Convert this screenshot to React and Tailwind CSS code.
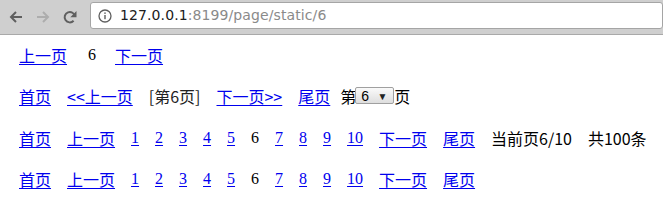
import React from "react";

const cjk = "font-['Noto_Sans_CJK_SC',sans-serif]";
const serif = "font-['Liberation_Serif','Noto_Sans_CJK_SC',serif]";
const link = "text-[#0000ee] underline underline-offset-2";

const BrowserBar = () => (
  <div className="h-[35px] bg-[#cfcfcf] border-b border-[#a9a9a9] flex items-center">
    {/* nav buttons */}
    <div className="flex items-center w-[90px] h-full">
      <svg width="16" height="16" viewBox="0 0 16 16" className="ml-[8px]">
        <path d="M14 8H3M8 3L3 8l5 5" fill="none" stroke="#5f5f5f" strokeWidth="2" />
      </svg>
      <svg width="16" height="16" viewBox="0 0 16 16" className="ml-[11px]">
        <path d="M2 8h11M8 3l5 5-5 5" fill="none" stroke="#adadad" strokeWidth="2" />
      </svg>
      <svg width="16" height="16" viewBox="0 0 16 16" className="ml-[11px]">
        <path d="M13 7.5A5.2 5.2 0 1 0 11.6 11.8" fill="none" stroke="#5f5f5f" strokeWidth="2" />
        <path d="M14.5 2v6.2H8.3z" fill="#5f5f5f" />
      </svg>
    </div>
    <div className="flex-1 h-[27px] mt-[-3px] bg-white border border-[#a5a5a5] rounded-[3px] flex items-center">
      <svg width="14" height="14" viewBox="0 0 14 14" className="ml-[7px]">
        <circle cx="7" cy="7" r="6" fill="none" stroke="#5f5f5f" strokeWidth="1.3" />
        <rect x="6.3" y="6" width="1.4" height="4.2" fill="#5f5f5f" />
        <rect x="6.3" y="3.4" width="1.4" height="1.5" fill="#5f5f5f" />
      </svg>
      <span className="ml-[8px] text-[14px] font-['DejaVu_Sans',sans-serif] tracking-[0.1px]">
        <span className="text-[#202020]">127.0.0.1</span>
        <span className="text-[#8a8a8a]">:8199/page/static/6</span>
      </span>
    </div>
  </div>
);

const nums = [1, 2, 3, 4, 5, 6, 7, 8, 9, 10];

const NumRow = ({ extra }) => (
  <div className="flex items-center gap-4 text-[16px]">
    <a className={`${cjk} ${link}`}>首页</a>
    <a className={`${cjk} ${link}`}>上一页</a>
    {nums.map((n) =>
      n === 6 ? (
        <span key={n} className={`${serif} text-black`}>{n}</span>
      ) : (
        <a key={n} className={`${serif} ${link}`}>{n}</a>
      )
    )}
    <a className={`${cjk} ${link}`}>下一页</a>
    <a className={`${cjk} ${link}`}>尾页</a>
    {extra}
  </div>
);

export default function App() {
  return (
    <div className="w-[663px] h-[219px] bg-white overflow-hidden">
      <BrowserBar />
      <div className="pl-[19px] text-[16px] leading-[20px]">
        <div className="h-[40px] flex items-center">
          <a className={`${cjk} ${link}`}>上一页</a>
          <span className={`${serif} ml-[21px] text-black`}>6</span>
          <a className={`${cjk} ${link} ml-[19px]`}>下一页</a>
        </div>
        <div className="h-[41px] flex items-center">
          <a className={`${cjk} ${link}`}>首页</a>
          <a className={`${cjk} ${link} ml-4`}>&lt;&lt;上一页</a>
          <span className={`${cjk} ml-4 text-[#222]`}>[第6页]</span>
          <a className={`${cjk} ${link} ml-4`}>下一页&gt;&gt;</a>
          <a className={`${cjk} ${link} ml-4`}>尾页</a>
          <span className={`${cjk} ml-[10px] text-black`}>第</span>
          <div className="ml-[-1px] w-[39px] h-[17px] border border-[#a0a0a0] rounded-[2px] bg-gradient-to-b from-[#fafafa] to-[#dedede] flex items-center justify-between pl-[5px] pr-[6px]">
            <span className="text-[14px] leading-none font-['Liberation_Sans',sans-serif] text-black">6</span>
            <span className="text-[10px] leading-none text-[#222]">▼</span>
          </div>
          <span className={`${cjk} text-black`}>页</span>
        </div>
        <div className="h-[43px] flex items-center">
          <NumRow
            extra={
              <>
                <span className={`${cjk} text-black`}>当前页6/10</span>
                <span className={`${cjk} text-black`}>共100条</span>
              </>
            }
          />
        </div>
        <div className="h-[40px] flex items-center">
          <NumRow />
        </div>
      </div>
    </div>
  );
}
